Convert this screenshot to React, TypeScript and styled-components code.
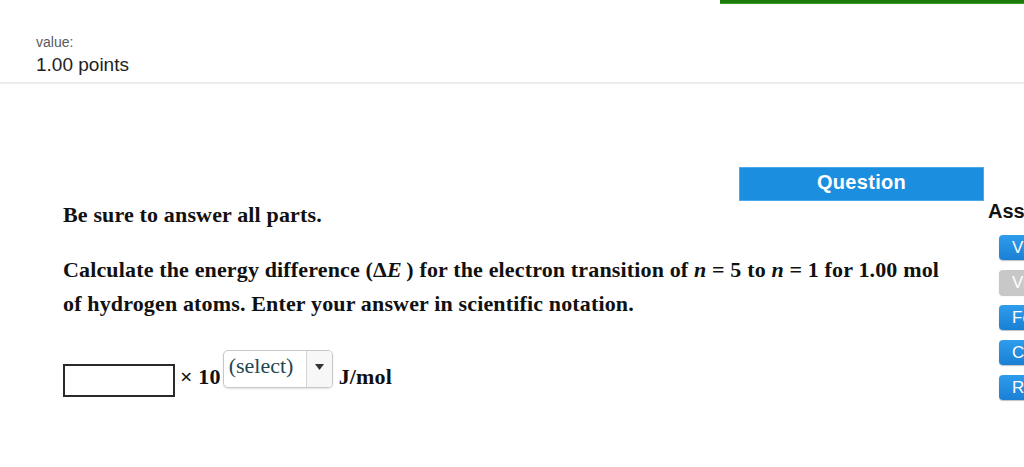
import React from 'react';
import styled, { createGlobalStyle } from 'styled-components';

const GlobalStyle = createGlobalStyle`
  html, body {
    margin: 0;
    padding: 0;
    background: #fff;
    overflow: hidden;
  }
  body {
    font-family: "Liberation Sans", Arial, sans-serif;
    width: 1024px;
    height: 467px;
  }
`;

const Page = styled.div`
  width: 1024px;
  height: 467px;
  overflow: hidden;
  display: flex;
  flex-direction: column;
`;

// Barra de progresso verde no topo
const TopBar = styled.div`
  display: flex;
  justify-content: flex-end;
  height: 0;
`;

const Progress = styled.div`
  width: 304px;
  height: 4px;
  background: #1f7a0c;
  border-bottom: 1px solid #3a9a22;
  box-sizing: border-box;
`;

const Header = styled.div`
  padding: 34px 36px 5px;
  border-bottom: 2px solid #ececec;
`;

const ValueLabel = styled.div`
  font-size: 14px;
  line-height: 17px;
  color: #5a5a5a;
`;

const Points = styled.div`
  font-size: 19px;
  line-height: 24px;
  padding-top: 2px;
  color: #222;
`;

const Body = styled.div`
  display: flex;
  flex: 1;
`;

const Main = styled.div`
  width: 988px;
  flex-shrink: 0;
  display: flex;
  flex-direction: column;
`;

const TabRow = styled.div`
  display: flex;
  justify-content: flex-end;
  padding: 83px 4px 0 0;
`;

const Tab = styled.div`
  width: 245px;
  height: 34px;
  box-sizing: border-box;
  background: #1b8ee0;
  border: 1px solid #4aa8ec;
  color: #fff;
  font-family: "Liberation Sans", Arial, sans-serif;
  font-weight: bold;
  font-size: 20px;
  line-height: 28px;
  text-align: center;
  letter-spacing: 0.3px;
`;

const Question = styled.div`
  max-width: 886px;
  margin-top: -3px;
  padding-left: 63px;
  font-family: "Liberation Serif", "Times New Roman", serif;
  font-weight: bold;
  font-size: 22px;
  line-height: 34px;
  letter-spacing: 0.15px;
  color: #111;
`;

const Para = styled.p<{ $gap?: number }>`
  margin: ${(p) => p.$gap ?? 0}px 0 0;
`;

const Var = styled.i`
  font-style: italic;
`;

const AnswerRow = styled.div`
  display: flex;
  align-items: flex-start;
  margin-top: 29px;
`;

const AnswerBox = styled.div`
  width: 112px;
  height: 33px;
  box-sizing: border-box;
  border: 2px solid #2a2a2a;
  margin-top: 14px;
`;

const Inline = styled.span<{ $left?: number }>`
  margin: 15px 0 0 ${(p) => p.$left ?? 0}px;
  line-height: 24px;
  white-space: nowrap;
`;

const Select = styled.div`
  display: flex;
  width: 110px;
  height: 38px;
  box-sizing: border-box;
  border: 1px solid #c9c9c9;
  border-radius: 5px;
  box-shadow: 0 1px 2px rgba(0, 0, 0, 0.12);
  margin-left: 2px;
  overflow: hidden;
  background: #fff;
`;

const SelectLabel = styled.span`
  flex: 1;
  padding: 3px 0 0 5px;
  font-weight: normal;
  font-size: 22px;
  line-height: 24px;
  letter-spacing: 0;
  color: #1f4852;
`;

const SelectArrow = styled.span`
  width: 26px;
  border-left: 1px solid #d4d4d4;
  background: #f7f7f7;
  display: flex;
  align-items: center;
  justify-content: center;
  padding-bottom: 4px;
  box-sizing: border-box;
`;

const Sidebar = styled.div`
  width: 200px;
  flex-shrink: 0;
  padding-top: 116px;
`;

const SideTitle = styled.div`
  font-family: "Liberation Sans", Arial, sans-serif;
  font-weight: bold;
  font-size: 20px;
  line-height: 22px;
  color: #111;
`;

const SideButtons = styled.div`
  display: flex;
  flex-direction: column;
  gap: 10px;
  margin: 13px 0 0 11px;
`;

const SideButton = styled.div<{ $disabled?: boolean }>`
  width: 150px;
  height: 25px;
  box-sizing: border-box;
  border-radius: 4px;
  padding-left: 13px;
  background: ${(p) =>
    p.$disabled ? '#c8c8c8' : 'linear-gradient(#2f9cec, #1a80d4)'};
  box-shadow: 0 1px 1px rgba(0, 0, 0, 0.25);
  color: #fff;
  font-family: "Liberation Sans", Arial, sans-serif;
  font-size: 17px;
  line-height: 25px;
  white-space: nowrap;
`;

const sideItems = [
  { label: 'View Hint', disabled: false },
  { label: 'View Solution', disabled: true },
  { label: 'Feedback', disabled: false },
  { label: 'Check my work', disabled: false },
  { label: 'Reference', disabled: false },
];

export default function App() {
  return (
    <Page>
      <GlobalStyle />
      <TopBar>
        <Progress />
      </TopBar>
      <Header>
        <ValueLabel>value:</ValueLabel>
        <Points>1.00 points</Points>
      </Header>
      <Body>
        <Main>
          <TabRow>
            <Tab>Question</Tab>
          </TabRow>
          <Question>
            <Para>Be sure to answer all parts.</Para>
            <Para $gap={21}>
              Calculate the energy difference (Δ<Var>E</Var>&thinsp;) for the electron transition of{' '}
              <Var>n</Var> = 5 to <Var>n</Var> = 1 for 1.00 mol of hydrogen atoms. Enter your
              answer in scientific notation.
            </Para>
            <AnswerRow>
              <AnswerBox />
              <Inline $left={5}>× 10</Inline>
              <Select>
                <SelectLabel>(select)</SelectLabel>
                <SelectArrow>
                  <svg width="9" height="6" viewBox="0 0 9 6">
                    <path d="M0 0 L9 0 L4.5 6 Z" fill="#333" />
                  </svg>
                </SelectArrow>
              </Select>
              <Inline $left={6}>J/mol</Inline>
            </AnswerRow>
          </Question>
        </Main>
        <Sidebar>
          <SideTitle>Assistance</SideTitle>
          <SideButtons>
            {sideItems.map((item) => (
              <SideButton key={item.label} $disabled={item.disabled}>
                {item.label}
              </SideButton>
            ))}
          </SideButtons>
        </Sidebar>
      </Body>
    </Page>
  );
}
